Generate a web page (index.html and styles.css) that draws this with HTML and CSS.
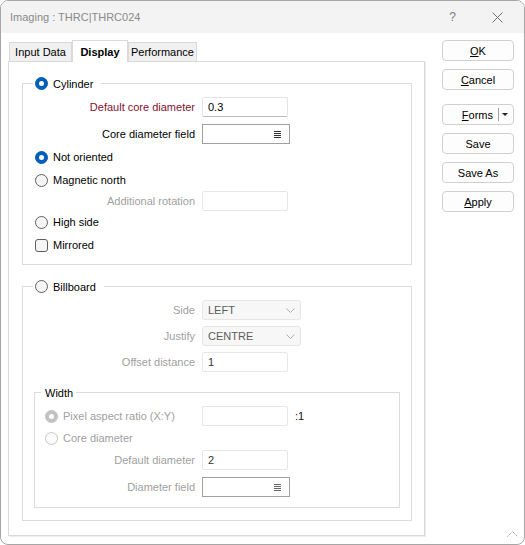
FILE: index.html
```html
<!DOCTYPE html>
<html>

<head>
    <link rel="stylesheet" href="styles.css">
</head>

<body>
    <div class="window">
        <div class="titlebar">
            <span class="title">Imaging : THRC|THRC024</span>
            <span class="help">?</span>
            <svg class="close" width="11" height="11" viewBox="0 0 11 11">
                <path d="M0.5 0.5L10.5 10.5M10.5 0.5L0.5 10.5" stroke="#707070" stroke-width="1" fill="none" />
            </svg>
        </div>

        <div class="main">
            <div class="tabs">
                <div class="tabstrip">
                    <div class="tab t-input">Input Data</div>
                    <div class="tab t-display active">Display</div>
                    <div class="tab t-perf">Performance</div>
                </div>

                <div class="panel">
                    <!-- Cylinder -->
                    <div class="group outer cylinder">
                        <div class="legend"><span class="radio on"></span>Cylinder</div>
                        <div class="row mt5">
                            <label class="lbl required">Default core diameter</label>
                            <div class="input">0.3</div>
                        </div>
                        <div class="row mt7">
                            <label class="lbl">Core diameter field</label>
                            <div class="input field">
                                <svg width="7" height="7" viewBox="0 0 7 7">
                                    <path d="M0 0.5H7M0 2.5H7M0 4.5H7M0 6.5H7" stroke="#333" stroke-width="1" />
                                </svg>
                            </div>
                        </div>
                        <div class="opt mt3"><span class="radio on"></span>Not oriented</div>
                        <div class="opt mt3"><span class="radio"></span>Magnetic north</div>
                        <div class="row mt1">
                            <label class="lbl off">Additional rotation</label>
                            <div class="input dis"></div>
                        </div>
                        <div class="opt mt1"><span class="radio"></span>High side</div>
                        <div class="opt mt3"><span class="check"></span>Mirrored</div>
                    </div>

                    <!-- Billboard -->
                    <div class="group outer billboard">
                        <div class="legend"><span class="radio"></span>Billboard</div>
                        <div class="row mt5">
                            <label class="lbl off">Side</label>
                            <div class="select">LEFT
                                <svg width="9" height="5" viewBox="0 0 9 5">
                                    <path d="M0.5 0.5L4.5 4.5L8.5 0.5" stroke="#b0b0b0" fill="none" />
                                </svg>
                            </div>
                        </div>
                        <div class="row mt6">
                            <label class="lbl off">Justify</label>
                            <div class="select">CENTRE
                                <svg width="9" height="5" viewBox="0 0 9 5">
                                    <path d="M0.5 0.5L4.5 4.5L8.5 0.5" stroke="#b0b0b0" fill="none" />
                                </svg>
                            </div>
                        </div>
                        <div class="row mt6">
                            <label class="lbl off">Offset distance</label>
                            <div class="input dis">1</div>
                        </div>

                        <div class="group width">
                            <div class="legend plain">Width</div>
                            <div class="row mt5">
                                <div class="lbl opt-in off"><span class="radio on dim"></span>Pixel aspect ratio (X:Y)</div>
                                <div class="input dis"></div>
                                <span class="ratio">:1</span>
                            </div>
                            <div class="opt mt2 off"><span class="radio dim"></span>Core diameter</div>
                            <div class="row mt2">
                                <label class="lbl off">Default diameter</label>
                                <div class="input dis">2</div>
                            </div>
                            <div class="row mt7">
                                <label class="lbl off">Diameter field</label>
                                <div class="input field">
                                    <svg width="7" height="7" viewBox="0 0 7 7">
                                        <path d="M0 0.5H7M0 2.5H7M0 4.5H7M0 6.5H7" stroke="#666" stroke-width="1" />
                                    </svg>
                                </div>
                            </div>
                        </div>
                    </div>
                </div>
            </div>

            <div class="buttons">
                <div class="btn"><u>O</u>K</div>
                <div class="btn"><u>C</u>ancel</div>
                <div class="btn split">
                    <span class="split-label"><u>F</u>orms</span>
                    <span class="split-bar"></span>
                    <span class="split-arrow"></span>
                </div>
                <div class="btn">Save</div>
                <div class="btn">Save As</div>
                <div class="btn"><u>A</u>pply</div>
            </div>
        </div>

        <svg class="grip" width="11" height="6" viewBox="0 0 11 6">
            <path d="M0.5 5.5L5.5 0.5L10.5 5.5" stroke="#8a8a8a" stroke-width="1" stroke-dasharray="1 1" fill="none" />
        </svg>
    </div>
</body>

</html>
```

FILE: styles.css
```css
/* Whole dialog */
body {
    margin: 0;
    font-family: "Liberation Sans", Arial, sans-serif;
    font-size: 11px;
    color: #000;
    background: #fff;
}

.window {
    position: relative;
    width: 525px;
    height: 545px;
    box-sizing: border-box;
    border: 1px solid #a6a6a6;
    border-radius: 8px;
    overflow: hidden;
    background: #fff;
}

/* Title bar */
.titlebar {
    height: 32px;
    background: #f3f3f3;
    display: flex;
    align-items: center;
    padding-left: 9px;
}

.title {
    color: #8a8a8a;
    font-size: 11px;
}

.help {
    margin-left: auto;
    margin-right: 36px;
    color: #7a7a7a;
    font-size: 12px;
}

.close {
    margin-right: 21px;
}

.main {
    display: flex;
}

/* Tabs */
.tabs {
    margin-left: 7px;
    width: 417px;
}

.tabstrip {
    display: flex;
    align-items: flex-end;
    height: 28px;
    padding-left: 1px;
}

.tab {
    height: 19px;
    box-sizing: border-box;
    border: 1px solid #d9d9d9;
    border-bottom: none;
    background: #f0f0f0;
    display: flex;
    align-items: center;
    justify-content: center;
}

.t-input {
    width: 63px;
}

.t-display {
    width: 56px;
}

.t-perf {
    width: 69px;
}

.tab.active {
    height: 22px;
    margin-bottom: -1px;
    background: #fff;
    font-weight: bold;
    position: relative;
    z-index: 1;
}

.panel {
    height: 475px;
    box-sizing: border-box;
    border: 1px solid #d9d9d9;
    box-shadow: 1px 1px 0 #ececec;
    background: #fff;
    padding-top: 21px;
}

/* Group boxes */
.group {
    border: 1px solid #dcdcdc;
    display: flex;
    flex-direction: column;
    box-sizing: border-box;
}

.group.outer {
    width: 390px;
    margin-left: 13px;
}

.cylinder {
    padding-bottom: 9px;
}

.billboard {
    margin-top: 21px;
}

.group.width {
    width: 366px;
    margin: 20px 0 12px 11px;
    padding-bottom: 10px;
}

.legend {
    align-self: flex-start;
    display: flex;
    align-items: center;
    height: 17px;
    margin-top: -9px;
    margin-left: 10px;
    padding: 0 8px 0 2px;
    background: #fff;
}

.legend.plain {
    margin-left: 6px;
    padding: 0 3px 0 4px;
}

/* Rows */
.row {
    display: flex;
    align-items: center;
    height: 20px;
}

.opt {
    display: flex;
    align-items: center;
    height: 20px;
    padding-left: 12px;
}

.width .opt {
    padding-left: 10px;
}

.mt1 { margin-top: 1px; }
.mt2 { margin-top: 2px; }
.mt3 { margin-top: 3px; }
.mt5 { margin-top: 5px; }
.mt6 { margin-top: 6px; }
.mt7 { margin-top: 7px; }

.lbl {
    width: 172px;
    margin-right: 7px;
    text-align: right;
}

.width .lbl {
    width: 160px;
}

.lbl.opt-in {
    display: flex;
    align-items: center;
    text-align: left;
    padding-left: 10px;
    box-sizing: border-box;
}

.required {
    color: #86102f;
}

.off {
    color: #a0a0a0;
}

/* Inputs */
.input {
    width: 86px;
    height: 20px;
    box-sizing: border-box;
    border: 1px solid #e3e3e3;
    border-bottom-color: #bcbcbc;
    border-radius: 2px;
    padding-left: 5px;
    display: flex;
    align-items: center;
    color: #000;
}

.input.dis {
    border-color: #e6e6e6;
    color: #333;
}

.input.field {
    width: 88px;
    border: 1px solid #a0a0a0;
    border-radius: 0;
    justify-content: flex-end;
    padding-right: 8px;
}

.select {
    width: 99px;
    height: 20px;
    box-sizing: border-box;
    border: 1px solid #e6e6e6;
    border-radius: 3px;
    background: #f7f7f7;
    color: #5c5c5c;
    padding: 0 5px 0 5px;
    display: flex;
    align-items: center;
    justify-content: space-between;
}

.ratio {
    margin-left: 7px;
    color: #111;
}

/* Radios and checkbox */
.radio {
    width: 13px;
    height: 13px;
    box-sizing: border-box;
    border: 1px solid #5f5f5f;
    border-radius: 50%;
    background: #f5f5f5;
    margin-right: 5px;
    display: flex;
    align-items: center;
    justify-content: center;
    flex: none;
}

.radio.on {
    background: #005fb8;
    border-color: #005fb8;
}

.radio.on::after {
    content: "";
    width: 5px;
    height: 5px;
    border-radius: 50%;
    background: #fff;
}

.radio.dim {
    border-color: #c6c6c6;
    background: #fbfbfb;
}

.radio.on.dim {
    background: #c2c2c2;
    border-color: #c2c2c2;
}

.check {
    width: 13px;
    height: 13px;
    box-sizing: border-box;
    border: 1px solid #5f5f5f;
    border-radius: 3px;
    background: #f5f5f5;
    margin-right: 5px;
}

/* Buttons on the right */
.buttons {
    margin-left: 17px;
    padding-top: 7px;
    width: 72px;
}

.btn {
    height: 21px;
    box-sizing: border-box;
    border: 1px solid #d0d0d0;
    border-radius: 4px;
    background: #fdfdfd;
    margin-bottom: 8px;
    display: flex;
    align-items: center;
    justify-content: center;
}

.btn.split {
    margin-top: 14px;
    justify-content: flex-end;
}

.split-label {
    padding-right: 5px;
}

.split-bar {
    width: 1px;
    height: 13px;
    background: #a0a0a0;
}

.split-arrow {
    width: 0;
    height: 0;
    margin: 0 5px 0 3px;
    border-left: 3px solid transparent;
    border-right: 3px solid transparent;
    border-top: 3px solid #222;
}

.grip {
    position: absolute;
    right: 6px;
    bottom: 7px;
}
```
